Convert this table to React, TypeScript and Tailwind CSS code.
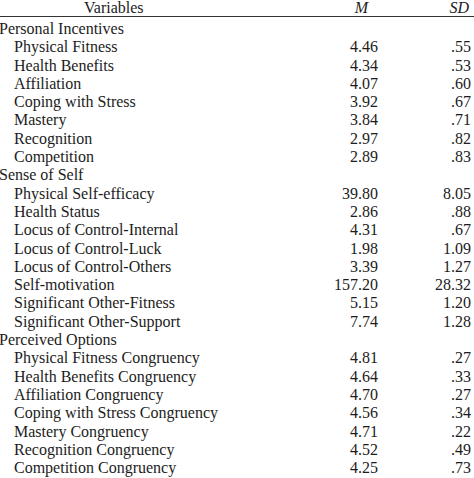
import React from "react";

type Row = { label: string; m?: string; sd?: string; head?: boolean };

const rows: Row[] = [
  { label: "Personal Incentives", head: true },
  { label: "Physical Fitness", m: "4.46", sd: ".55" },
  { label: "Health Benefits", m: "4.34", sd: ".53" },
  { label: "Affiliation", m: "4.07", sd: ".60" },
  { label: "Coping with Stress", m: "3.92", sd: ".67" },
  { label: "Mastery", m: "3.84", sd: ".71" },
  { label: "Recognition", m: "2.97", sd: ".82" },
  { label: "Competition", m: "2.89", sd: ".83" },
  { label: "Sense of Self", head: true },
  { label: "Physical Self-efficacy", m: "39.80", sd: "8.05" },
  { label: "Health Status", m: "2.86", sd: ".88" },
  { label: "Locus of Control-Internal", m: "4.31", sd: ".67" },
  { label: "Locus of Control-Luck", m: "1.98", sd: "1.09" },
  { label: "Locus of Control-Others", m: "3.39", sd: "1.27" },
  { label: "Self-motivation", m: "157.20", sd: "28.32" },
  { label: "Significant Other-Fitness", m: "5.15", sd: "1.20" },
  { label: "Significant Other-Support", m: "7.74", sd: "1.28" },
  { label: "Perceived Options", head: true },
  { label: "Physical Fitness Congruency", m: "4.81", sd: ".27" },
  { label: "Health Benefits Congruency", m: "4.64", sd: ".33" },
  { label: "Affiliation Congruency", m: "4.70", sd: ".27" },
  { label: "Coping with Stress Congruency", m: "4.56", sd: ".34" },
  { label: "Mastery Congruency", m: "4.71", sd: ".22" },
  { label: "Recognition Congruency", m: "4.52", sd: ".49" },
  { label: "Competition Congruency", m: "4.25", sd: ".73" },
];

export default function App() {
  return (
    <div className="w-[474px] h-[478px] overflow-hidden bg-white text-[#1c1c1c] text-[16px] font-['Liberation_Serif',serif]">
      {/* header */}
      <div className="grid grid-cols-[300px_78px_93px] h-[17px] leading-[16px] border-b-[1.5px] border-[#333]">
        <div className="pl-[84px]">Variables</div>
        <div className="text-right pr-[10px] italic">M</div>
        <div className="text-right pr-[2px] italic">SD</div>
      </div>
      <div className="pt-[3px]">
        {rows.map((r, i) => (
          <div key={i} className="grid grid-cols-[300px_78px_93px] h-[18.3px] leading-[18.3px]">
            <div className={r.head ? "-ml-[1px]" : "pl-[14px]"}>{r.label}</div>
            <div className="text-right">{r.m}</div>
            <div className="text-right">{r.sd}</div>
          </div>
        ))}
      </div>
    </div>
  );
}
